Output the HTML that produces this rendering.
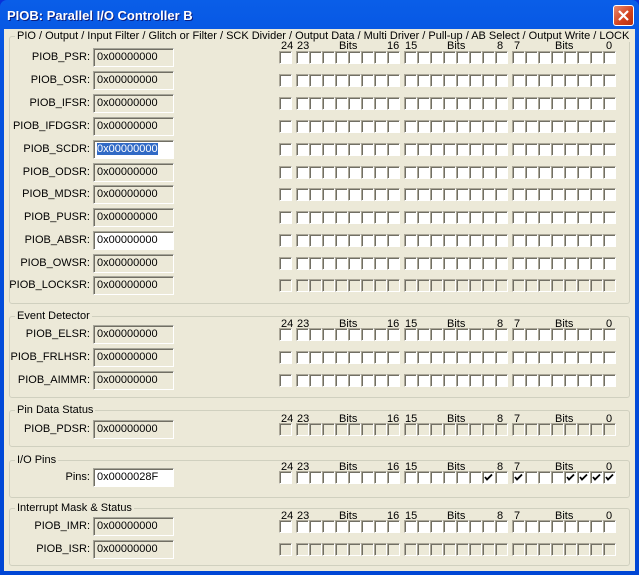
<!DOCTYPE html>
<html><head><meta charset="utf-8">
<style>
*{margin:0;padding:0;box-sizing:border-box}
body{width:639px;height:575px;overflow:hidden;background:#0831d9;font-family:"Liberation Sans",sans-serif;font-size:11px;color:#000;position:relative}
#win{position:absolute;left:0;top:0;width:639px;height:575px;background:linear-gradient(#0a5ee8,#0553e0 10%,#0046d5);border-radius:7px 7px 0 0}
#title{position:absolute;left:7px;top:8px;color:#fff;font-weight:bold;font-size:13px;text-shadow:1px 1px #0a1e80}
#close{position:absolute;left:613px;top:5px;width:21px;height:21px;border:1px solid #fff;border-radius:3px;background:linear-gradient(135deg,#e98a6e,#d2401c 60%,#b8300f)}
#client{position:absolute;left:4px;top:29px;width:631px;height:542px;background:#ECE9D8}
.a{position:absolute;white-space:nowrap}
.g{position:absolute;border:1px solid #d0d0bf;border-radius:3px}
.gl{position:absolute;background:#ECE9D8;padding:0 2px;white-space:nowrap;line-height:12px}
.lb{position:absolute;width:86px;text-align:right;left:0;line-height:13px}
.f{position:absolute;left:89px;width:81px;height:19px;border:1px solid;border-color:#a7a69a #fff #fff #a7a69a;box-shadow:inset 1px 1px #716f64;background:#ECE9D8;padding:2px 0 0 3px;line-height:13px}
.f.w{background:#fff}
.sel{background:#316ac5;color:#fff}
.cb{position:absolute;width:13px;height:13px;border:1px solid;border-color:#aca899 #fff #fff #aca899;box-shadow:inset 1px 1px #716f64;background:#fff}
.cb.d{background:#ECE9D8}
.ck{position:absolute}
.h{position:absolute;line-height:12px}
</style></head><body>
<div id="win">
<div id="title">PIOB: Parallel I/O Controller B</div>
<div id="close"><svg width="19" height="19"><path d="M5 5L14 14M14 5L5 14" stroke="#fff" stroke-width="2.2"/></svg></div>
<div id="client">
<div class="g" style="left:5px;top:7px;width:621px;height:268px"></div>
<div class="gl" style="left:11px;top:1px">PIO / Output / Input Filter / Glitch or Filter / SCK Divider / Output Data / Multi Driver / Pull-up / AB Select / Output Write / LOCK</div>
<div class="g" style="left:5px;top:287px;width:621px;height:82px"></div>
<div class="gl" style="left:11px;top:281px">Event Detector</div>
<div class="g" style="left:5px;top:381px;width:621px;height:37px"></div>
<div class="gl" style="left:11px;top:375px">Pin Data Status</div>
<div class="g" style="left:5px;top:431px;width:621px;height:38px"></div>
<div class="gl" style="left:11px;top:425px">I/O Pins</div>
<div class="g" style="left:5px;top:479px;width:621px;height:58px"></div>
<div class="gl" style="left:11px;top:473px">Interrupt Mask &amp; Status</div>
<div id="rows"></div>
</div></div>
<script>
var C=document.getElementById('rows');
var rows=[
["PIOB_PSR:",28,0,0],["PIOB_OSR:",51,0,0],["PIOB_IFSR:",74,0,0],["PIOB_IFDGSR:",97,0,0],["PIOB_SCDR:",120,2,0],
["PIOB_ODSR:",143,0,0],["PIOB_MDSR:",165,0,0],["PIOB_PUSR:",188,0,0],["PIOB_ABSR:",211,1,0],["PIOB_OWSR:",234,0,0],["PIOB_LOCKSR:",256,0,1],
["PIOB_ELSR:",305,0,0],["PIOB_FRLHSR:",328,0,0],["PIOB_AIMMR:",351,0,0],
["PIOB_PDSR:",400,0,1],
["Pins:",448,1,0,0x28F],
["PIOB_IMR:",497,0,0],["PIOB_ISR:",520,0,1]];
var heads=[17,295,390,438,487];
var h='';
heads.forEach(function(y){
 [["24",277],["23",293],["Bits",335],["16",383],["15",401],["Bits",443],["8",493],["7",510],["Bits",551],["0",602]].forEach(function(t){
  h+='<div class="h" style="left:'+t[1]+'px;top:'+(y-6)+'px">'+t[0]+'</div>';});
});
rows.forEach(function(r){
 var y=r[1];
 h+='<div class="lb" style="top:'+(y-6)+'px">'+r[0]+'</div>';
 var val=r[4]!==undefined?'0x0000028F':'0x00000000';
 h+='<div class="f'+(r[2]?' w':'')+'" style="top:'+(y-9)+'px">'+(r[2]==2?'<span class="sel">'+val+'</span>':val)+'</div>';
 for(var b=24;b>=0;b--){
  var x;
  if(b==24)x=275;else if(b>=16)x=292+(23-b)*13;else if(b>=8)x=400+(15-b)*13;else x=508+(7-b)*13;
  var ck=(r[4]!==undefined&&(r[4]>>b)&1)?'<svg class="ck" width="9" height="9" style="left:1px;top:1px"><path d="M1 4L3 6.5L8 1.5" stroke="#000" stroke-width="1.8" fill="none"/></svg>':'';
  h+='<div class="cb'+(r[3]?' d':'')+'" style="left:'+x+'px;top:'+(y-6)+'px">'+ck+'</div>';
 }
});
C.innerHTML=h;
</script>
</body></html>
